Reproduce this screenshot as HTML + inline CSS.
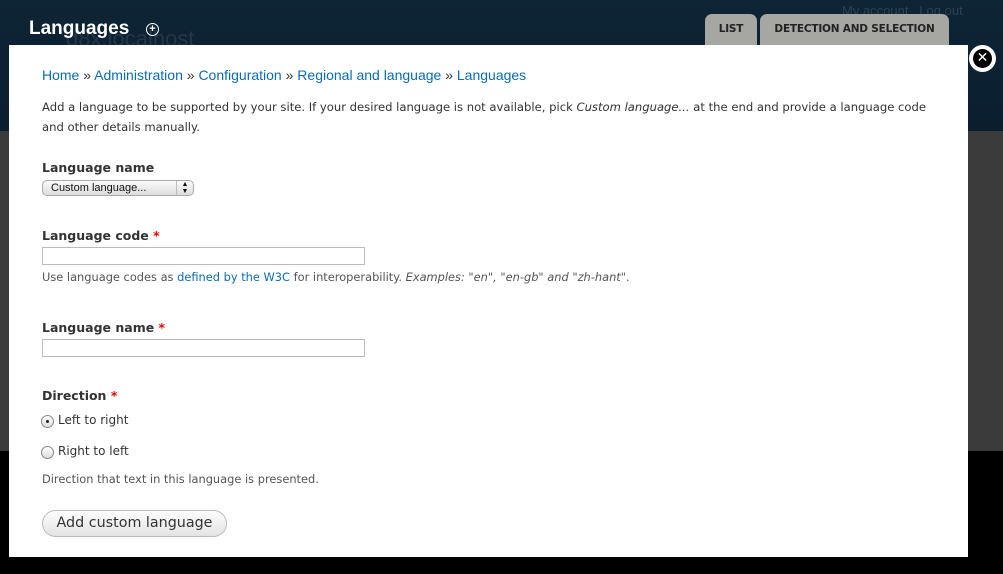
<!DOCTYPE html>
<html><head><meta charset="utf-8"><style>
*{margin:0;padding:0;box-sizing:border-box}
body{width:1003px;height:574px;overflow:hidden;position:relative;font-family:"DejaVu Sans","Liberation Sans",sans-serif;background:#000}
.top{position:absolute;left:0;top:0;width:1003px;height:131px;background:linear-gradient(#0e2536,#0a1e2e)}
.gray{position:absolute;left:0;top:131px;width:1003px;height:320px;background:#3b3b3b}
.title{position:absolute;left:29px;top:18px;color:#fff;font:bold 19px "Liberation Sans",sans-serif}
.plus{position:absolute;left:146px;top:23px;width:13px;height:13px;border:1.5px solid #fff;border-radius:50%;color:#fff;font:bold 11px/10px "Liberation Sans";text-align:center}
.site{position:absolute;left:66px;top:26px;color:#26364a;font:22px "Liberation Sans",sans-serif}
.acct{position:absolute;left:842px;top:3px;color:#2f4050;font:13px "Liberation Sans",sans-serif}
.tab{position:absolute;top:14px;height:35px;background:#a6a6a2;border-radius:7px 7px 0 0;font:bold 10.5px "DejaVu Sans",sans-serif;letter-spacing:-0.2px;color:#222;padding-top:9px;text-align:center}
.modal{position:absolute;left:9px;top:45px;width:959px;height:512px;background:#fff}
.close{position:absolute;left:969px;top:45px;width:27px;height:27px;background:#fff;border-radius:50%}
.close div{position:absolute;left:4px;top:4px;width:19px;height:19px;background:#000;border-radius:50%;color:#fff;font:bold 14px/19px "DejaVu Sans";text-align:center}
.t{position:absolute;font-size:11.6px;color:#333;white-space:nowrap}
a{color:#0a6cb5;text-decoration:none}
.lbl{font-weight:bold;font-size:12.5px}
.req{color:#e00}
.inp{position:absolute;left:42px;width:323px;height:18px;border:1px solid #bbb;background:#fff}
.radio{position:absolute;left:41px;width:13px;height:13px;border:1px solid #888;border-radius:50%;background:linear-gradient(#fff,#ddd)}
</style></head><body>
<div class="top"></div><div class="gray"></div>
<div class="site">d8x.localhost</div>
<div class="title">Languages</div><div class="plus">+</div>
<div class="acct">My account &nbsp; Log out</div>
<div class="tab" style="left:705px;width:52px">LIST</div>
<div class="tab" style="left:760px;width:189px">DETECTION AND SELECTION</div>
<div class="modal"></div>
<div class="close"><div>✕</div></div>
<div class="t" style="left:42px;top:67px;font:14px 'Liberation Sans',sans-serif"><a>Home</a> » <a>Administration</a> » <a>Configuration</a> » <a>Regional and language</a> » <a>Languages</a></div>
<div class="t" style="left:42px;top:100px">Add a language to be supported by your site. If your desired language is not available, pick <i>Custom language...</i> at the end and provide a language code</div>
<div class="t" style="left:42px;top:120px">and other details manually.</div>
<div class="t lbl" style="left:42px;top:160px">Language name</div>
<div style="position:absolute;left:42px;top:180px;width:152px;height:16px;border:1px solid #aaa;border-radius:5px;background:linear-gradient(#fafafa,#ddd);font:11px 'Liberation Sans',sans-serif;padding:1px 0 0 8px;color:#111">Custom language...<span style="position:absolute;right:0;top:0;width:17px;height:14px;border-left:1px solid #bbb;font-size:7px;line-height:7px;text-align:center">▲<br>▼</span></div>
<div class="t lbl" style="left:42px;top:228px">Language code <span class="req">*</span></div>
<div class="inp" style="top:247px"></div>
<div class="t" style="left:42px;top:270px;color:#555;font-size:11.4px">Use language codes as <a>defined by the W3C</a> for interoperability. <i>Examples: "en", "en-gb" and "zh-hant"</i>.</div>
<div class="t lbl" style="left:42px;top:320px">Language name <span class="req">*</span></div>
<div class="inp" style="top:339px"></div>
<div class="t lbl" style="left:42px;top:388px">Direction <span class="req">*</span></div>
<div class="radio" style="top:415px"><div style="width:3px;height:3px;background:#222;border-radius:50%;margin:4px"></div></div>
<div class="t" style="left:58px;top:413px;font-size:12px">Left to right</div>
<div class="radio" style="top:446px"></div>
<div class="t" style="left:58px;top:444px;font-size:12px">Right to left</div>
<div class="t" style="left:42px;top:472px;color:#555;font-size:11.4px">Direction that text in this language is presented.</div>
<div style="position:absolute;left:42px;top:510px;width:185px;height:27px;border:1px solid #bbb;border-radius:14px;background:linear-gradient(#fdfdfd,#e3e3e3);font-size:14.3px;color:#333;text-align:center;line-height:25px">Add custom language</div>
</body></html>
